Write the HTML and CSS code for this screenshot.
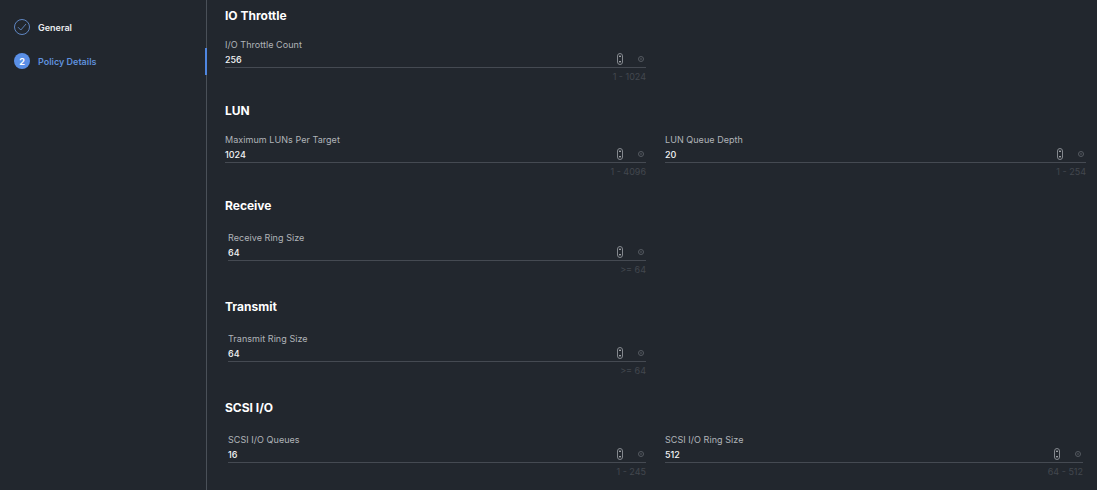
FILE: index.html
```html
<!DOCTYPE html>
<html lang="en">
<head>
<meta charset="UTF-8">
<title>Policy Details</title>
<link rel="stylesheet" href="styles.css">
</head>
<body>
    <div class="page">
        <nav class="sidebar">
            <div class="step">
                <span class="stepIcon done">
                    <svg width="10" height="10" viewBox="0 0 10 10"><path d="M1 5.2 L3.8 8 L9 2" fill="none" stroke="#6b96d6" stroke-width="0.8"/></svg>
                </span>
                <span class="stepName">General</span>
            </div>
            <div class="step current">
                <span class="stepIcon active">2</span>
                <span class="stepName">Policy Details</span>
            </div>
        </nav>

        <main class="content">
            <section class="group">
                <h2>IO Throttle</h2>
                <div class="row">
                    <div class="field">
                        <label>I/O Throttle Count</label>
                        <div class="inputLine">
                            <span class="value">256</span>
                            <span class="spinner"><i class="up"></i><i class="down"></i></span>
                            <span class="info"></span>
                        </div>
                        <div class="hint">1 - 1024</div>
                    </div>
                </div>
            </section>

            <section class="group">
                <h2>LUN</h2>
                <div class="row">
                    <div class="field">
                        <label>Maximum LUNs Per Target</label>
                        <div class="inputLine">
                            <span class="value">1024</span>
                            <span class="spinner"><i class="up"></i><i class="down"></i></span>
                            <span class="info"></span>
                        </div>
                        <div class="hint">1 - 4096</div>
                    </div>
                    <div class="field">
                        <label>LUN Queue Depth</label>
                        <div class="inputLine">
                            <span class="value">20</span>
                            <span class="spinner"><i class="up"></i><i class="down"></i></span>
                            <span class="info"></span>
                        </div>
                        <div class="hint">1 - 254</div>
                    </div>
                </div>
            </section>

            <section class="group tall inset">
                <h2>Receive</h2>
                <div class="row">
                    <div class="field">
                        <label>Receive Ring Size</label>
                        <div class="inputLine">
                            <span class="value">64</span>
                            <span class="spinner"><i class="up"></i><i class="down"></i></span>
                            <span class="info"></span>
                        </div>
                        <div class="hint">&gt;= 64</div>
                    </div>
                </div>
            </section>

            <section class="group tall inset">
                <h2>Transmit</h2>
                <div class="row">
                    <div class="field">
                        <label>Transmit Ring Size</label>
                        <div class="inputLine">
                            <span class="value">64</span>
                            <span class="spinner"><i class="up"></i><i class="down"></i></span>
                            <span class="info"></span>
                        </div>
                        <div class="hint">&gt;= 64</div>
                    </div>
                </div>
            </section>

            <section class="group inset">
                <h2>SCSI I/O</h2>
                <div class="row">
                    <div class="field">
                        <label>SCSI I/O Queues</label>
                        <div class="inputLine">
                            <span class="value">16</span>
                            <span class="spinner"><i class="up"></i><i class="down"></i></span>
                            <span class="info"></span>
                        </div>
                        <div class="hint">1 - 245</div>
                    </div>
                    <div class="field narrow">
                        <label>SCSI I/O Ring Size</label>
                        <div class="inputLine">
                            <span class="value">512</span>
                            <span class="spinner"><i class="up"></i><i class="down"></i></span>
                            <span class="info"></span>
                        </div>
                        <div class="hint">64 - 512</div>
                    </div>
                </div>
            </section>
        </main>
    </div>
</body>
</html>
```

FILE: styles.css
```css
* {
    box-sizing: border-box;
}

html, body {
    height: 100%;
}

body {
    margin: 0;
    overflow: hidden;
    background-color: #22272e;
    font-family: "Inter", "Liberation Sans", sans-serif;
    color: #fff;
}

.page {
    display: flex;
    height: 490px;
}

/* left column with the wizard steps */
.sidebar {
    flex: 0 0 207px;
    padding-top: 17px;
    border-right: 1px solid #4a5058;
}

.step {
    display: flex;
    align-items: center;
    gap: 8px;
    height: 20px;
    margin-bottom: 14px;
    padding-left: 14px;
    font-size: 9px;
    font-weight: 600;
    color: #e8eaed;
}

.step.current {
    position: relative;
    color: #5f90dc;
}

.step.current::after {
    content: "";
    position: absolute;
    right: -1px;
    top: -3px;
    width: 2px;
    height: 27px;
    background-color: #4f86e0;
}

.stepIcon {
    display: flex;
    justify-content: center;
    align-items: center;
    width: 16px;
    height: 16px;
    border-radius: 50%;
}

.stepIcon.done {
    border: 1px solid #5f86c2;
}

.stepIcon.active {
    background-color: #5a8fe6;
    color: #fff;
    font-size: 9px;
    font-weight: 700;
}

/* form */
.content {
    flex: 1;
    padding: 8px 12px 0 18px;
}

.group {
    height: 95px;
}

.group.tall {
    height: 101px;
}

h2 {
    margin: 0 0 16px;
    height: 15px;
    font-size: 12px;
    line-height: 15px;
    font-weight: 700;
}

.row {
    display: flex;
    gap: 19px;
}

.inset .row {
    margin-top: 19px;
}

.field {
    flex: 0 0 421px;
}

.inset .field:first-child {
    padding-left: 3px;
}

.inset .field.narrow {
    padding-right: 3px;
}

label {
    display: block;
    height: 14px;
    font-size: 9px;
    line-height: 12px;
    letter-spacing: 0.05px;
    color: #b0b4b9;
}

.inputLine {
    display: flex;
    align-items: center;
    height: 15px;
    padding-bottom: 2px;
    border-bottom: 1px solid #454a52;
}

.value {
    flex: 1;
    font-size: 9px;
    font-weight: 500;
    color: #f2f3f4;
}

.spinner {
    position: relative;
    width: 6px;
    height: 12px;
    margin-right: 15px;
    border: 1px solid #84888e;
    border-radius: 3px;
}

.spinner i {
    position: absolute;
    left: 1px;
    width: 0;
    height: 0;
    border-left: 1px solid transparent;
    border-right: 1px solid transparent;
}

.spinner .up {
    top: 1px;
    border-bottom: 2px solid #c4c6c9;
}

.spinner .down {
    bottom: 1px;
    border-top: 2px solid #c4c6c9;
}

.info {
    position: relative;
    width: 6px;
    height: 6px;
    margin-right: 2px;
    margin-bottom: 1px;
    border: 1px solid #555a61;
    border-radius: 50%;
}

.info::after {
    content: "";
    position: absolute;
    left: 1px;
    top: 1px;
    width: 2px;
    height: 2px;
    background-color: #3a3f46;
}

.hint {
    margin-top: 3px;
    font-size: 9px;
    line-height: 12px;
    text-align: right;
    color: #42474e;
}
```
